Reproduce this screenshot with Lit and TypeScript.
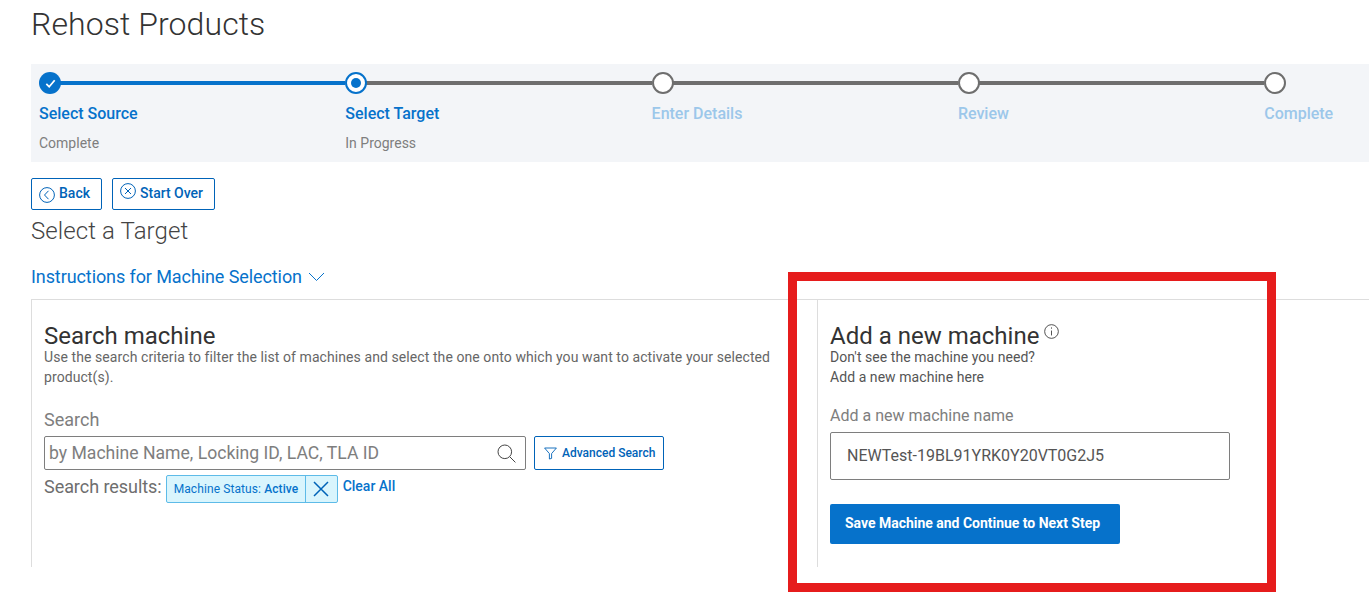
import { LitElement, html, css, svg } from "lit";
import { customElement } from "lit/decorators.js";

const steps = [
  { label: "Select Source", sub: "Complete", state: "done" },
  { label: "Select Target", sub: "In Progress", state: "active" },
  { label: "Enter Details", sub: "", state: "todo" },
  { label: "Review", sub: "", state: "todo" },
  { label: "Complete", sub: "", state: "todo" },
];

@customElement("app-root")
export class AppRoot extends LitElement {
  static styles = css`
    :host { display: block; width: 1369px; height: 592px; position: relative; overflow: hidden; background: #fff; font-family: Roboto, "Liberation Sans", sans-serif; color: #444; }
    * { box-sizing: border-box; }
    .page { padding: 0 0 0 31px; display: flex; flex-direction: column; }
    h1 { margin: 0; height: 64px; padding-top: 6px; font-size: 32px; line-height: 37px; font-weight: 300; color: #333; letter-spacing: 0.08px; }
    .stepper { height: 98px; background: #f3f5f8; padding: 8px 0 0 8px; display: flex; }
    .step { width: 306.3px; flex: none; display: flex; flex-direction: column; position: relative; }
    .track { height: 22px; display: flex; align-items: center; position: relative; }
    .line { flex: 1; height: 4px; background: #6e6e6e; margin-left: -1px; }
    .step.done .line { background: #0672cb; }
    .node { width: 22px; height: 22px; border-radius: 50%; flex: none; position: relative; z-index: 1; display: flex; align-items: center; justify-content: center; }
    .done .node { background: #0672cb; }
    .active .node { background: #fff; border: 2px solid #0672cb; }
    .active .node::after { content: ""; width: 10px; height: 10px; border-radius: 50%; background: #0672cb; }
    .todo .node { background: #fff; border: 2px solid #6e6e6e; }
    .last .line { display: none; }
    .label { margin-top: 10px; font-size: 16px; line-height: 19px; font-weight: 500; color: #0672cb; white-space: nowrap; }
    .todo .label { color: #9cc7ea; }
    .sub { margin-top: 11px; font-size: 14px; line-height: 18px; color: #7e7e7e; }
    .actions { display: flex; gap: 10px; margin-top: 16px; height: 32px; }
    .btn { height: 32px; border: 1px solid #0063b8; border-radius: 2px; background: #fff; color: #0063b8; font-size: 14px; font-weight: 500; display: flex; align-items: center; font-family: inherit; padding: 0 0 2px; }
    .back { width: 71px; padding-left: 7px; gap: 4px; }
    .back svg { position: relative; top: 2px; }
    .over { width: 103px; padding-left: 7px; gap: 4px; }
    .over svg { position: relative; top: -2px; }
    h2 { margin: 3px 0 0; font-size: 24px; line-height: 36px; font-weight: 300; color: #444; letter-spacing: 0.1px; height: 36px; }
    .instr { margin-top: 16px; height: 24px; display: flex; align-items: center; gap: 6px; color: #0672cb; font-size: 18px; line-height: 24px; letter-spacing: -0.09px; }
    .panel { margin-top: 10px; height: 268px; border-left: 1px solid #ddd; border-top: 1px solid #ddd; display: flex; }
    .left { width: 785px; flex: none; padding: 24px 0 0 12px; }
    .right { flex: 1; border-left: 1px solid #ddd; padding: 24px 0 0 12px; }
    h3 { margin: 0; height: 23px; font-size: 24px; line-height: 24px; font-weight: 400; color: #333; display: flex; }
    h3 svg { margin: 0 0 0 5px; }
    .desc { margin: 0; width: 740px; font-size: 14px; line-height: 20px; color: #666; letter-spacing: 0.08px; }
    .rdesc { margin: 0; font-size: 14px; line-height: 20px; color: #555; letter-spacing: 0.06px; }
    .flabel { margin-top: 22px; font-size: 18px; line-height: 22px; color: #7e7e7e; }
    .row { margin-top: 5px; display: flex; gap: 8px; }
    .search { width: 482px; height: 34px; border: 1px solid #7e7e7e; border-radius: 2px; display: flex; align-items: center; justify-content: space-between; padding: 0 9px 0 4px; font-size: 17.6px; color: #7e7e7e; }
    .adv { width: 130px; height: 34px; padding: 0 0 0 9px; gap: 5px; font-size: 12px; }
    .results { margin-top: 5px; display: flex; align-items: flex-start; font-size: 18px; line-height: 24px; color: #6e6e6e; letter-spacing: -0.05px; }
    .chip { margin-left: 4px; height: 28px; display: flex; background: #d9f5fd; border: 1px solid #5dbbe8; border-radius: 2px; color: #0672cb; font-size: 12px; align-items: center; letter-spacing: 0.1px; }
    .chip b { font-weight: 500; margin-left: 3px; }
    .chip-text { padding: 0 7px; height: 100%; display: flex; align-items: center; border-right: 1px solid #5dbbe8; width: 139px; white-space: nowrap; }
    .chip-x { width: 31px; display: flex; align-items: center; justify-content: center; }
    .clear { margin-left: 5px; font-size: 14px; font-weight: 500; color: #0672cb; line-height: 20px; margin-top: 1px; letter-spacing: 0; }
    .rlabel { margin-top: 19px; font-size: 16px; line-height: 20px; color: #7e7e7e; }
    .name { margin-top: 6px; width: 400px; height: 48px; border: 1px solid #7e7e7e; border-radius: 2px; padding: 0 0 1px 16px; display: flex; align-items: center; font-size: 16px; color: #555; }
    .save { margin-top: 24px; width: 290px; height: 40px; background: #0672cb; border-radius: 2px; color: #fff; font-size: 14px; font-weight: 700; padding: 0 0 2px 15px; display: flex; align-items: center; letter-spacing: -0.02px; }
    .frame { position: absolute; left: 788px; top: 272px; width: 488px; height: 320px; border: 9px solid #e61c1c; pointer-events: none; }
  `;

  private circleIcon(inner: unknown, size = 16, color = "#0063b8") {
    return html`<svg width=${size} height=${size} viewBox="0 0 16 16" fill="none" stroke=${color} stroke-width="1">
      <circle cx="8" cy="8" r="7.4"></circle>${inner}
    </svg>`;
  }

  render() {
    return html`
      <div class="page">
        <h1>Rehost Products</h1>
        <div class="stepper">
          ${steps.map((s, i) => html`
            <div class="step ${s.state} ${i === steps.length - 1 ? "last" : ""}">
              <div class="track">
                <div class="node">
                  ${s.state === "done"
                    ? html`<svg width="11" height="11" viewBox="0 0 10 10" fill="none" stroke="#fff" stroke-width="1.6"><path d="M1.2 5.4 L3.8 8 L8.8 2"></path></svg>`
                    : ""}
                </div>
                <div class="line"></div>
              </div>
              <div class="label">${s.label}</div>
              ${s.sub ? html`<div class="sub">${s.sub}</div>` : ""}
            </div>`)}
        </div>
        <div class="actions">
          <button class="btn back">
            ${this.circleIcon(svg`<path d="M9.5 3.8 L5.5 8 L9.5 12.2"></path>`)}Back
          </button>
          <button class="btn over">
            ${this.circleIcon(svg`<path d="M5 5 L11 11 M11 5 L5 11"></path>`)}Start Over
          </button>
        </div>
        <h2>Select a Target</h2>
        <div class="instr">
          Instructions for Machine Selection
          <svg width="17" height="10" viewBox="0 0 17 10" fill="none" stroke="#0672cb" stroke-width="1"><path d="M1 1 L8.5 8.5 L16 1"></path></svg>
        </div>
        <div class="panel">
          <div class="left">
            <h3>Search machine</h3>
            <p class="desc">Use the search criteria to filter the list of machines and select the one onto which you want to activate your selected product(s).</p>
            <div class="flabel">Search</div>
            <div class="row">
              <div class="search">
                <span>by Machine Name, Locking ID, LAC, TLA ID</span>
                <svg width="19" height="19" viewBox="0 0 19 19" fill="none" stroke="#444" stroke-width="1"><circle cx="7.8" cy="7.8" r="6.8"></circle><path d="M12.8 12.8 L18.4 18.4"></path></svg>
              </div>
              <button class="btn adv">
                <svg width="13" height="13" viewBox="0 0 13 13" fill="none" stroke="#0063b8" stroke-width="0.9"><path d="M0.6 1 H12.4 L7.6 6.6 V11.4 L5.4 12 V6.6 Z"></path></svg>
                Advanced Search
              </button>
            </div>
            <div class="results">
              <span>Search results:</span>
              <div class="chip">
                <span class="chip-text">Machine Status:<b>Active</b></span>
                <span class="chip-x"><svg width="16" height="16" viewBox="0 0 16 16" fill="none" stroke="#0063b8" stroke-width="1.5"><path d="M1 1 L15 15 M15 1 L1 15"></path></svg></span>
              </div>
              <span class="clear">Clear All</span>
            </div>
          </div>
          <div class="right">
            <h3>Add a new machine
              <svg width="15" height="15" viewBox="0 0 16 16" fill="none" stroke="#333" stroke-width="0.9"><circle cx="8" cy="8" r="7.3"></circle><path d="M8 7 V12.2 M8 3.6 V5"></path></svg>
            </h3>
            <p class="rdesc">Don't see the machine you need?</p>
            <p class="rdesc">Add a new machine here</p>
            <div class="rlabel">Add a new machine name</div>
            <div class="name">NEWTest-19BL91YRK0Y20VT0G2J5</div>
            <div class="save">Save Machine and Continue to Next Step</div>
          </div>
        </div>
      </div>
      <div class="frame"></div>
    `;
  }
}
